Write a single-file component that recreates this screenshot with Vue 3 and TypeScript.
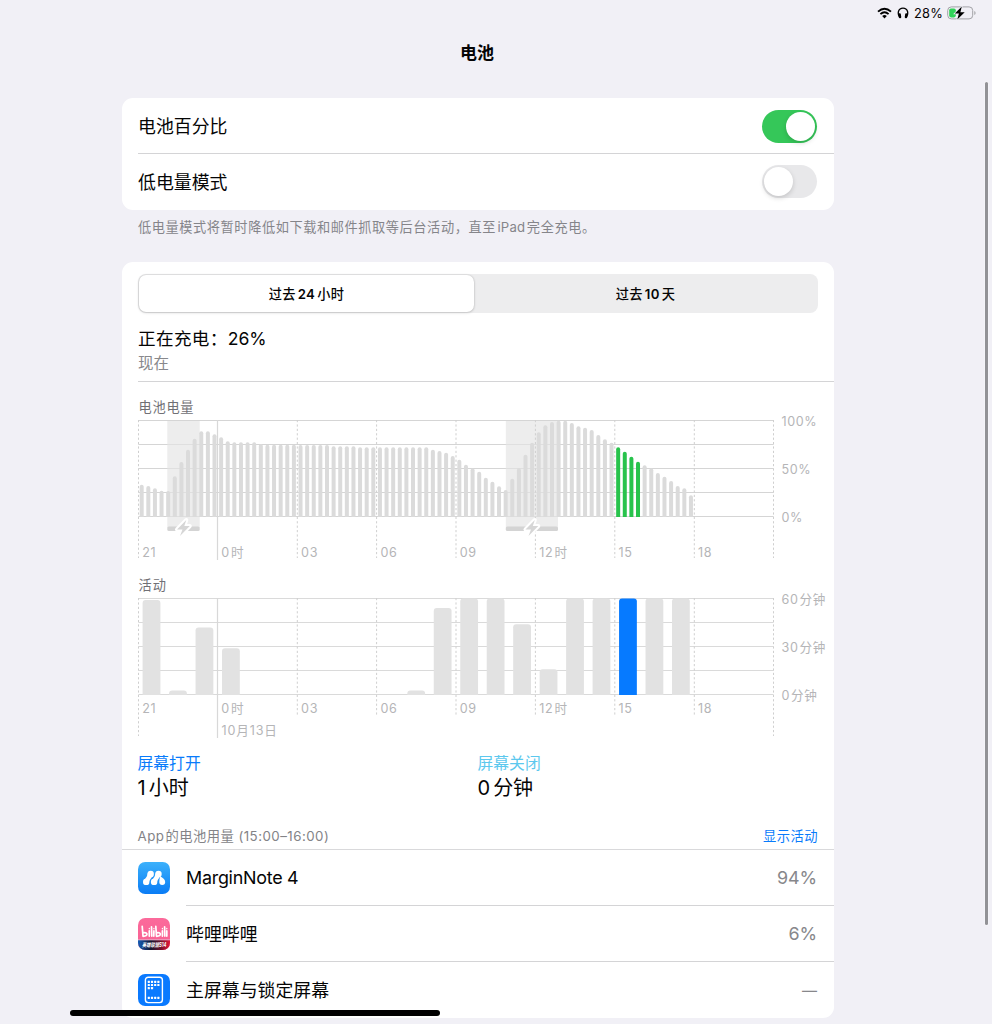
<script setup lang="ts">
import { ref } from 'vue'

interface Tick { x: number; label: string; unit?: string; solid?: boolean }
interface AppUsage { id: string; name: string; share: string }

const percentOn = ref(true)
const lowPower = ref(false)
const range = ref<'day' | 'days'>('day')

const LEFT = 138.5
const RIGHT = 773.5
const HOUR = 26.47
const QUARTER = HOUR / 4

const ticks: Tick[] = [
  { x: 138.5, label: '21' },
  { x: 217.5, label: '0', unit: '时', solid: true },
  { x: 297.3, label: '03' },
  { x: 376.6, label: '06' },
  { x: 456, label: '09' },
  { x: 535.4, label: '12', unit: '时' },
  { x: 614.8, label: '15' },
  { x: 694.3, label: '18' },
  { x: 773.5, label: '' },
]

const rows = [0, 24, 48, 72, 96]

// Bar heights in thirds of a pixel above the baseline, one per quarter hour.
const levels: number[] = [
  97, 93, 86, 79, 78, 122, 165, 202, 235, 257, 257, 248, 239, 227, 224, 224, 224, 224, 219, 217,
  217, 217, 217, 217, 216, 216, 216, 216, 216, 212, 212, 212, 212,
  209, 209, 209, 209, 209, 209, 209, 209, 209, 209, 209,
  202, 198, 193, 183, 172, 157, 146, 136, 118, 106, 92, 81,
  115, 147, 187, 223, 254, 275, 285, 289, 289, 282, 272, 268, 261, 246, 233, 223,
  209, 196, 181, 166, 155, 146, 132, 121, 108, 93, 86, 65,
]

const levelBars = levels.map((v, i) => {
  const x = 139.7 + i * QUARTER
  const top = 517 - v / 3
  return {
    d: `M${x} 517V${top + 2}a2 2 0 0 1 4 0V517Z`,
    active: i >= 72 && i < 76,
  }
})

const minutes: [number, number][] = [
  [0, 59], [1, 2.8], [2, 42], [3, 29], [10, 2.8], [11, 54], [12, 60], [13, 60],
  [14, 44], [15, 16], [16, 60], [17, 60], [18, 60], [19, 60], [20, 60],
]

const activityBars = minutes.map(([h, m]) => {
  const x = 142.6 + h * HOUR
  const top = 695 - m * 1.61
  return {
    d: `M${x} 695V${top + 3}q0 -3 3 -3h11.8q3 0 3 3V695Z`,
    active: h === 18,
  }
})

const charging = [
  { x: 167.3, width: 32.4, bolt: 183.5 },
  { x: 505.8, width: 52.2, bolt: 532 },
]

const apps: AppUsage[] = [
  { id: 'margin', name: 'MarginNote 4', share: '94%' },
  { id: 'bili', name: '哔哩哔哩', share: '6%' },
  { id: 'home', name: '主屏幕与锁定屏幕', share: '—' },
]

const homeDots: [number, number][] = [
  [10.6, 7], [13.8, 7], [17, 7], [20.2, 7],
  [10.6, 10.2], [13.8, 10.2], [17, 10.2], [20.2, 10.2],
  [10.6, 13.4], [13.8, 13.4],
  [10.6, 23], [13.8, 23], [17, 23], [20.2, 23],
]
</script>

<template>
  <div class="screen">
    <header class="status">
      <svg class="wifi" width="15" height="12" viewBox="0 0 15 12">
        <g fill="none" stroke="#000" stroke-width="1.9">
          <path d="M1 4.6Q7.5 -1.3 14 4.6" />
          <path d="M3.4 7.1Q7.5 3.4 11.6 7.1" />
        </g>
        <path d="M5.2 9Q7.5 7.1 9.8 9L7.5 11.4Z" />
      </svg>
      <svg class="phones" width="12" height="12" viewBox="0 0 12 12">
        <path d="M2.5 10.2C.2 6.5 1.1 1.2 6 1.2s5.800 5.300 3.500 9" fill="none" stroke="#000" stroke-width="1.3" />
        <rect x="1.700" y="6.300" width="2.400" height="5" rx="1.100" transform="rotate(-8 3 9)" />
        <rect x="7.900" y="6.300" width="2.400" height="5" rx="1.100" transform="rotate(8 9 9)" />
      </svg>
      <span class="pct">28%</span>
      <svg class="cell" width="29" height="14" viewBox="0 0 29 14">
        <rect x=".7" y=".9" width="25" height="12" rx="3.600" fill="none" stroke="#a2a2a6" />
        <path d="M27.300 5v4q1.300-.6 1.300-2t-1.300-2Z" fill="#a2a2a6" />
        <rect x="2.200" y="2.400" width="6.600" height="9" rx="1.800" fill="#30d158" />
        <path d="M14.800.6 7.800 7.600h4.100L10.300 13.400 17.700 6.200h-4.300Z" stroke="#f1f0f6" stroke-width="1.400" paint-order="stroke" />
      </svg>
    </header>

    <h1 class="title">电池</h1>

    <main class="content">
      <section class="card">
        <div class="setting">
          <span>电池百分比</span>
          <button class="switch" :class="{ on: percentOn }" @click="percentOn = !percentOn"><i /></button>
        </div>
        <div class="setting">
          <span>低电量模式</span>
          <button class="switch" :class="{ on: lowPower }" @click="lowPower = !lowPower"><i /></button>
        </div>
      </section>
      <p class="note">低电量模式将暂时降低如下载和邮件抓取等后台活动，直至<span class="latin">iPad</span>完全充电。</p>

      <section class="card usage">
        <div class="segment">
          <button :class="{ selected: range === 'day' }" @click="range = 'day'">过去<b>24</b>小时</button>
          <button :class="{ selected: range === 'days' }" @click="range = 'days'">过去<b>10</b>天</button>
        </div>
        <div class="charge">
          <div class="charge-main">正在充电：<span>26%</span></div>
          <div class="charge-sub">现在</div>
        </div>

        <svg class="charts" width="712" height="363" viewBox="122 382 712 363">
          <text class="heading" x="138.500" y="412" textLength="55">电池电量</text>
          <g class="grid">
            <line v-for="r in rows" :key="r" :x1="LEFT" :x2="RIGHT" :y1="420.5 + r" :y2="420.5 + r" />
          </g>
          <g v-for="c in charging" :key="c.x">
            <rect :x="c.x" y="421" :width="c.width" height="107" class="band" />
            <rect :x="c.x" y="526.600" :width="c.width" height="4.400" rx="1.500" class="band-foot" />
          </g>
          <g class="grid faint">
            <line v-for="r in rows" :key="r" :x1="LEFT" :x2="RIGHT" :y1="420.5 + r" :y2="420.5 + r" />
          </g>
          <path v-for="(b, i) in levelBars" :key="i" :d="b.d" :class="b.active ? 'green' : 'level'" />
          <line v-for="t in ticks" :key="t.x" :x1="t.x" :x2="t.x" y1="420" :y2="t.solid ? 560 : 558" :class="t.solid ? 'solid' : 'dash'" />
          <path
            v-for="c in charging" :key="c.bolt" class="bolt"
            :transform="`translate(${c.bolt} 528)`"
            d="M2.800-8-6.500 1.500H-1L-3.500 8 6.300-2H.8Z"
          />
          <text v-for="t in ticks" :key="t.label" class="axis" :x="t.x + 3.8" y="556.500">{{ t.label }}<tspan v-if="t.unit" dx="1.200">{{ t.unit }}</tspan></text>
          <text class="axis" x="781.500" y="425.500">100%</text>
          <text class="axis" x="781.500" y="473.500">50%</text>
          <text class="axis" x="781.500" y="522">0%</text>

          <text class="heading" x="138.500" y="590.200" textLength="27.500">活动</text>
          <g class="grid">
            <line v-for="r in rows" :key="r" :x1="LEFT" :x2="RIGHT" :y1="598.5 + r" :y2="598.5 + r" />
          </g>
          <path v-for="(b, i) in activityBars" :key="i" :d="b.d" :class="b.active ? 'blue' : 'minutes'" />
          <line
            v-for="(t, i) in ticks" :key="t.x" :x1="t.x" :x2="t.x" y1="598"
            :y2="i === 0 || i === 8 ? 736 : t.solid ? 738 : 715" :class="t.solid ? 'solid' : 'dash'"
          />
          <text v-for="t in ticks" :key="t.label" class="axis" :x="t.x + 3.8" y="713.200">{{ t.label }}<tspan v-if="t.unit" dx="1.200">{{ t.unit }}</tspan></text>
          <text class="axis" x="221.500" y="735" textLength="56">10月13日</text>
          <text class="axis" x="781.500" y="603.500">60<tspan dx="1">分钟</tspan></text>
          <text class="axis" x="781.500" y="651.700">30<tspan dx="1">分钟</tspan></text>
          <text class="axis" x="781.500" y="700">0<tspan dx="1">分钟</tspan></text>
        </svg>

        <div class="totals">
          <div>
            <div class="total-name on-name">屏幕打开</div>
            <div class="total-value"><span class="one">1</span>小时</div>
          </div>
          <div>
            <div class="total-name off-name">屏幕关闭</div>
            <div class="total-value"><span class="zero">0</span>分钟</div>
          </div>
        </div>

        <div class="list-head">
          <span><span class="app-word">App</span>的电池用量 <span class="hours">(15:00–16:00)</span></span>
          <a>显示活动</a>
        </div>
        <div v-for="app in apps" :key="app.id" class="app">
          <svg class="icon" width="32" height="32" viewBox="0 0 32 32">
            <defs>
              <linearGradient id="sky" x1="0" y1="0" x2="0" y2="1">
                <stop offset="0" stop-color="#3cb1fb" /><stop offset="1" stop-color="#0a7cf5" />
              </linearGradient>
              <linearGradient id="strip" x1="0" y1="0" x2="1" y2="0">
                <stop offset="0" stop-color="#145fb8" /><stop offset=".4" stop-color="#14152f" />
                <stop offset=".7" stop-color="#6d1029" /><stop offset="1" stop-color="#e7193b" />
              </linearGradient>
              <linearGradient id="rose" x1="0" y1="0" x2="0" y2="1">
                <stop offset="0" stop-color="#fb6a9b" /><stop offset="1" stop-color="#f95f92" />
              </linearGradient>
            </defs>
            <template v-if="app.id === 'margin'">
              <rect width="32" height="32" rx="7.200" fill="url(#sky)" />
              <g fill="#fff">
                <circle cx="12.700" cy="11.900" r="3.200" /><circle cx="8.200" cy="19.900" r="3.200" />
                <path d="M9.600 11.200Q9.600 15 5.600 17.900L10.600 22.100Q11.200 17.300 15.200 14Z" />
                <circle cx="20.500" cy="11.900" r="3.200" /><circle cx="16.100" cy="19.900" r="3.200" />
                <path d="M17.400 11.200Q17.400 15 13.500 17.900L18.500 22.100Q19.100 17.300 23 14Z" />
                <path d="M22.300 14.200Q27.200 17 27.200 20A2.950 2.950 0 0 1 21.300 20Q21.100 17.500 22.300 14.200Z" />
              </g>
            </template>
            <template v-else-if="app.id === 'bili'">
              <rect width="32" height="32" rx="7.200" fill="url(#rose)" />
              <g fill="none" stroke="#fff" stroke-width="1.700" stroke-linecap="round" stroke-linejoin="round">
                <path d="M4.200 8.300 5 18.300Q9.500 18 8.900 15.800 8.300 14 4.800 14.900" />
                <path d="M11.300 12.900v5.200M13.500 8.800l.3 9.300M15.900 12.900l-.1 5.200" />
                <path d="M17.800 8.300 18.500 18.300Q22.800 18 22.300 15.800 21.700 14 18.300 14.900" />
                <path d="M24.400 12.900v5.200M26.600 8.800l.2 9.300M28.800 12.900v5.200" />
                <path d="M11.300 10.500v.3M15.900 10.500v.3M24.400 10.500v.3M28.800 10.500v.3" stroke-width="1.300" />
              </g>
              <path d="M0 22H32V24.800A7.200 7.200 0 0 1 24.800 32H7.200A7.200 7.200 0 0 1 0 24.800Z" fill="url(#strip)" />
              <rect y="21.400" width="32" height=".9" fill="#e4b7cf" />
              <text class="strip-text" x="4" y="28.800" textLength="24.500" lengthAdjust="spacingAndGlyphs">英雄联盟S14</text>
            </template>
            <template v-else>
              <rect width="32" height="32" rx="7.200" fill="#0a7aff" />
              <rect x="7.400" y="3.200" width="17" height="25.400" rx="2.800" fill="none" stroke="#fff" stroke-width="1.400" />
              <rect v-for="(d, i) in homeDots" :key="i" :x="d[0] - .9" :y="d[1] - .3" width="2.200" height="2.200" rx=".4" fill="#fff" />
            </template>
          </svg>
          <div class="app-line">
            <span :class="['name', app.id]">{{ app.name }}</span>
            <span :class="['share', { none: app.id === 'home' }]">{{ app.share }}</span>
          </div>
        </div>
      </section>
    </main>

    <div class="scroll" />
    <div class="home-bar" />
  </div>
</template>

<style>
body {
  margin: 0;
  background: #f1f0f6;
}
</style>

<style scoped>
.screen {
  position: relative;
  width: 992px;
  height: 1024px;
  overflow: hidden;
  background: #f1f0f6;
  color: #050505;
  font-family: Inter, "Noto Sans CJK SC", sans-serif;
}
.screen * { box-sizing: border-box; }
button {
  border: 0;
  padding: 0;
  margin: 0;
  font: inherit;
  color: inherit;
}
.status {
  height: 26px;
  display: flex;
  align-items: center;
  justify-content: flex-end;
  padding-right: 16px;
}
.wifi { margin-right: 5px; }
.phones { margin-right: 5px; }
.pct {
  width: 29px;
  font-size: 12.8px;
  letter-spacing: 0.3px;
  white-space: nowrap;
  margin-right: 4px;
}
.title {
  width: 954px;
  height: 54px;
  margin: 0;
  line-height: 54px;
  text-align: center;
  font-size: 17px;
  font-weight: 600;
}
.content {
  width: 712px;
  margin: 18px 0 0 122px;
}
.card {
  background: #fff;
  border-radius: 11px;
}
.setting {
  height: 56px;
  margin-left: 16px;
  padding-right: 17px;
  display: flex;
  align-items: center;
  justify-content: space-between;
  font-size: 17.9px;
}
.setting span { padding-bottom: 2px; }
.setting:first-child { border-bottom: 1px solid #d4d4d6; }
.setting:first-child .switch { margin-top: 1px; }
.setting:last-child .switch { margin-bottom: 1px; }
.switch {
  width: 55px;
  height: 33px;
  padding: 2px;
  border-radius: 17px;
  background: #e8e8ea;
  display: flex;
}
.switch i {
  width: 29px;
  height: 29px;
  border-radius: 50%;
  background: #fff;
  box-shadow: 0 2px 5px rgba(0, 0, 0, 0.16);
}
.switch.on {
  background: #35c759;
  justify-content: flex-end;
}
.note {
  height: 52px;
  margin: 0;
  padding: 6px 0 0 16px;
  line-height: 22px;
  font-size: 13.2px;
  letter-spacing: 0.58px;
  color: #85858a;
  white-space: nowrap;
}
.latin { margin: 0 1.5px; letter-spacing: 0.2px; }
.usage {
  height: 756px;
  padding-top: 12px;
}
.segment {
  width: 680px;
  height: 39px;
  margin-left: 16px;
  padding: 1px;
  display: flex;
  border-radius: 8px;
  background: #ededee;
}
.segment button {
  flex: 1;
  padding-bottom: 1px;
  border-radius: 7px;
  background: transparent;
  font-size: 13.2px;
  font-weight: 500;
  letter-spacing: 0.35px;
}
.segment b {
  font-weight: 600;
  margin: 0 2px;
}
.segment .selected {
  flex: 0 0 335px;
  background: #fff;
  font-weight: 500;
  box-shadow: 0 0 2px rgba(0, 0, 0, 0.2), 0 1px 3px rgba(0, 0, 0, 0.12);
}
.charge {
  height: 69px;
  margin-left: 16px;
  padding-top: 13px;
  border-bottom: 1px solid #d4d4d6;
}
.charge-main {
  height: 25px;
  line-height: 25px;
  font-size: 17.6px;
  letter-spacing: 0.35px;
}
.charge-main span { letter-spacing: 0; }
.charge-sub {
  height: 24px;
  line-height: 26px;
  font-size: 15.5px;
  color: #88888c;
}
.charts { display: block; }
.heading {
  font-size: 13.2px;
  fill: #707075;
}
.axis {
  font-size: 12.6px;
  letter-spacing: 0.6px;
  fill: #b5b5b7;
}
.grid line { stroke: #dadada; }
.grid.faint line { stroke: #d2d2d2; opacity: 0.5; }
.band { fill: #ededed; }
.band-foot { fill: #d4d4d4; }
.level { fill: #dbdbdb; }
.green { fill: #28c34c; }
.minutes { fill: #e2e2e2; }
.blue { fill: #067aff; }
.solid { stroke: #d8d8d8; stroke-width: 1.2; }
.dash { stroke: #cfcfcf; stroke-dasharray: 2.2 2.2; }
.bolt {
  fill: #d6d6d6;
  stroke: #fff;
  stroke-width: 4px;
  stroke-linejoin: round;
  paint-order: stroke;
}
.totals {
  height: 79px;
  margin-left: 15.500px;
  padding-top: 7px;
  display: grid;
  grid-template-columns: 340px 1fr;
}
.total-name {
  height: 24px;
  line-height: 24px;
  font-size: 15.8px;
}
.on-name { color: #087bfb; }
.off-name { color: #5cc8ee; }
.total-value {
  height: 26px;
  line-height: 25px;
  font-size: 20px;
}
.one { margin-right: 3px; }
.zero { margin-right: 3px; }
.list-head {
  height: 26px;
  padding: 0 16px 0 15.500px;
  display: flex;
  justify-content: space-between;
  line-height: 24px;
  font-size: 13.3px;
  letter-spacing: 0.47px;
  border-bottom: 1px solid #d9d9db;
  color: #838387;
}
.app-word { margin-right: 1px; }
.list-head a { color: #087bfb; }
.app {
  height: 56px;
  padding-left: 16px;
  display: flex;
  align-items: center;
}
.icon { flex: none; margin-right: 16px; }
.app-line {
  flex: 1;
  height: 56px;
  padding-right: 17px;
  display: flex;
  align-items: center;
  justify-content: space-between;
  border-bottom: 1px solid #d4d4d6;
  font-size: 17.9px;
}
.name { padding-bottom: 2px; }
.name.margin { padding-bottom: 0; letter-spacing: -0.25px; }
.app:last-child .app-line { border-bottom-color: transparent; }
.share { color: #87878b; letter-spacing: -0.1px; }
.share.none { font-size: 15px; padding-top: 1px; }
.strip-text {
  font-size: 5.6px;
  font-weight: 700;
  font-style: italic;
  fill: #fff;
}
.scroll {
  position: absolute;
  left: 985px;
  top: 82px;
  width: 3px;
  height: 843px;
  border-radius: 2px;
  background: #929296;
  box-shadow: 0 0 1px 0.5px #f8f8fb;
}
.home-bar {
  position: absolute;
  left: 70px;
  top: 1010px;
  width: 370px;
  height: 6px;
  border-radius: 3px;
  background: #000;
}
</style>
